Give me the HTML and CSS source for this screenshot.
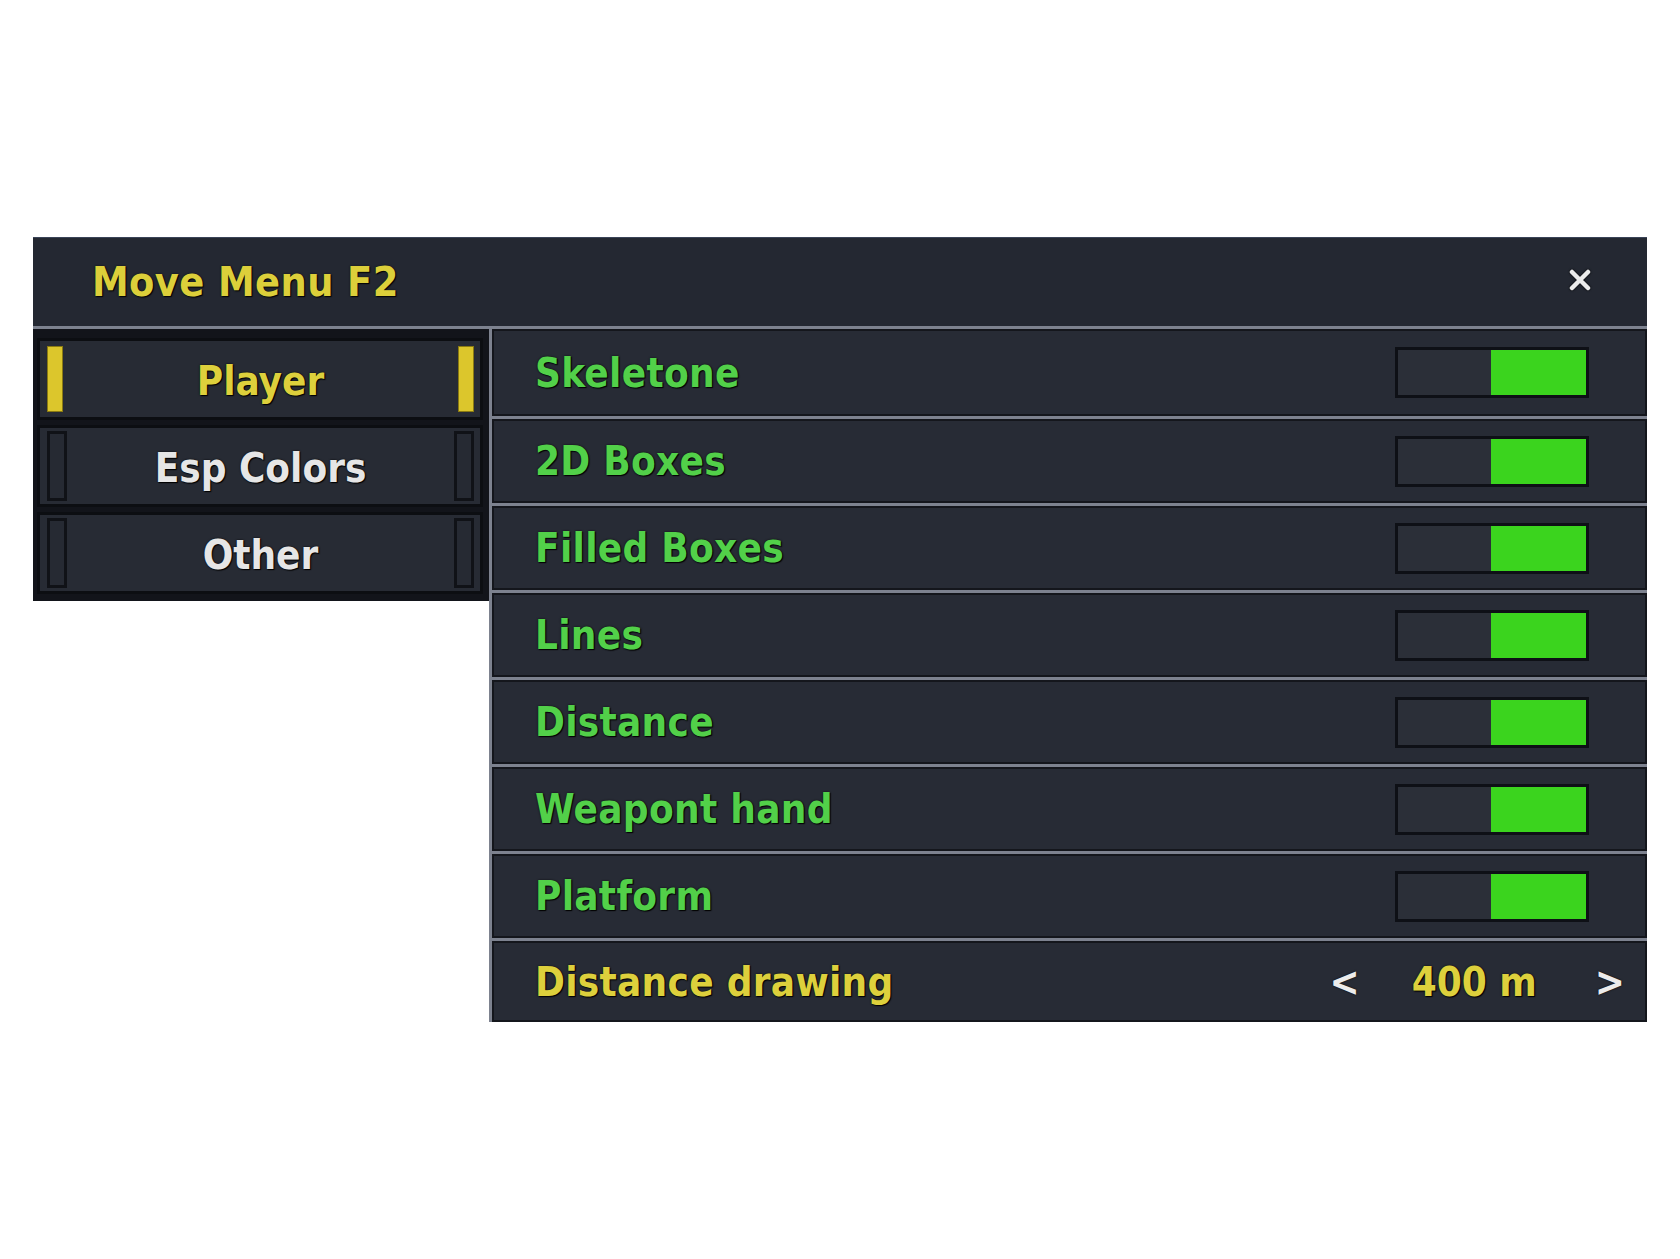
FILE: index.html
```html
<!DOCTYPE html>
<html>
<head>
<meta charset="utf-8">
<title>Move Menu F2</title>
<link rel="stylesheet" href="styles.css">
</head>
<body>
<div class="menu">
  <div class="menu-head">
    <span class="menu-title">Move Menu F2</span>
    <svg class="menu-close" width="22" height="22" viewBox="0 0 22 22"><path d="M3 3 L19 19 M19 3 L3 19"/></svg>
  </div>
  <div class="menu-body">
    <ul class="tabs">
      <li class="tab active"><i class="mark"></i><span>Player</span><i class="mark"></i></li>
      <li class="tab"><i class="mark"></i><span>Esp Colors</span><i class="mark"></i></li>
      <li class="tab"><i class="mark"></i><span>Other</span><i class="mark"></i></li>
    </ul>
    <div class="options">
      <div class="option"><span class="label">Skeletone</span><span class="toggle on"><i></i></span></div>
      <div class="option"><span class="label">2D Boxes</span><span class="toggle on"><i></i></span></div>
      <div class="option"><span class="label">Filled Boxes</span><span class="toggle on"><i></i></span></div>
      <div class="option"><span class="label">Lines</span><span class="toggle on"><i></i></span></div>
      <div class="option"><span class="label">Distance</span><span class="toggle on"><i></i></span></div>
      <div class="option"><span class="label">Weapont hand</span><span class="toggle on"><i></i></span></div>
      <div class="option"><span class="label">Platform</span><span class="toggle on"><i></i></span></div>
      <div class="option range">
        <span class="label">Distance drawing</span>
        <span class="stepper">
          <span class="arrow">&lt;</span>
          <span class="value">400 m</span>
          <span class="arrow">&gt;</span>
        </span>
      </div>
    </div>
  </div>
</div>
</body>
</html>
```

FILE: styles.css
```css
body { margin: 0; background: #fff; font: bold 40px/1 "DejaVu Sans Condensed", "DejaVu Sans", sans-serif; }
ul { margin: 0; padding: 0; list-style: none; }

.menu { width: 1614px; margin: 237px 0 0 33px; }
.menu-head { display: flex; align-items: center; justify-content: space-between; height: 88px; padding: 0 56px 0 59px; background: #242832; border-top: 1px solid #3a4458; border-bottom: 3px solid #7d828f; }
.menu-title { font-size: 41px; letter-spacing: 0.4px; color: #dccf3a; text-shadow: 0 0 2px #111, 1px 1px 1px #000; }
.menu-close { margin-top: -4px; fill: none; stroke: #ececec; stroke-width: 4.5; stroke-linecap: round; filter: drop-shadow(0 0 1px #000); }

.menu-body { display: flex; align-items: flex-start; }

.tabs { display: flex; flex-direction: column; gap: 5px; width: 446px; padding: 9px 6px 7px 4px; background: #12141a; }
.tab { display: flex; align-items: center; justify-content: space-between; height: 76px; padding: 0 6px 0 7px; border: 3px solid #0c0e12; background: #272b34; color: #e6e6e6; text-shadow: 0 0 2px #000, 1px 1px 1px #000; }
.tab span { flex: 1; padding-top: 3px; text-align: center; }
.tab .mark { width: 14px; height: 64px; border: 3px solid #101217; background: #262a33; }
.tab.active { color: #ddd03c; }
.tab.active .mark { border: 1px solid #8a7a12; background: #dcc62c; }

.options { flex: 1; border-left: 3px solid #7d828f; }
.option { display: flex; align-items: center; justify-content: space-between; height: 84px; padding: 0 58px 0 43px; border-top: 3px solid #7d828f; background: #272b35; box-shadow: inset 0 0 0 2px #14161c; }
.option:first-child { border-top: 0; height: 87px; }
.label { letter-spacing: 0.3px; color: #52d049; text-shadow: 0 0 2px #0a0a0a, 1px 1px 1px #000; }

.toggle { display: flex; justify-content: flex-end; width: 188px; height: 45px; border: 3px solid #0e1016; background: #2b2f38; }
.toggle i { width: 95px; height: 100%; }
.toggle.on i { background: #3bd41e; }

.range { height: 81px; padding-right: 22px; }
.range .label { color: #ddd03c; }
.stepper { display: flex; align-items: center; }
.arrow { color: #ececec; text-shadow: 0 0 2px #000; }
.value { margin: 0 58px 0 52px; color: #ddd03c; text-shadow: 0 0 2px #0a0a0a, 1px 1px 1px #000; }
```
